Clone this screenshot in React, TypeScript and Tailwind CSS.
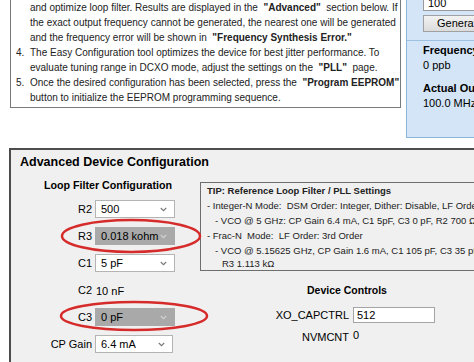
import React from "react";

function Chevron({ light }: { light?: boolean }) {
  return (
    <svg width="7" height="5" viewBox="0 0 7 5" className="shrink-0">
      <path d="M0.8 1 L3.5 3.7 L6.2 1" fill="none" stroke={light ? "#d0d0d0" : "#777"} strokeWidth="1.1" />
    </svg>
  );
}

function Select({ value, gray, w = 80 }: { value: string; gray?: boolean; w?: number }) {
  return (
    <div
      className={
        "h-[18px] flex items-center justify-between pl-[5px] pr-[7px] text-[11px] leading-none border " +
        (gray ? "bg-[#a9a9a9] border-[#a9a9a9]" : "bg-white border-[#b4b4b4]")
      }
      style={{ width: w }}
    >
      <span>{value}</span>
      <Chevron light={gray} />
    </div>
  );
}

function Row({ label, children }: { label: string; children: React.ReactNode }) {
  return (
    <div className="flex items-center h-[18px]">
      <div className="w-[81px] text-right text-[11px] leading-none">{label}</div>
      <div className="ml-[3px]">{children}</div>
    </div>
  );
}

export default function App() {
  return (
    <div className="relative w-[474px] h-[362px] overflow-hidden bg-white text-black font-['Liberation_Sans',Arial,sans-serif]">
      {/* top area */}
      <div className="flex h-[138px]">
        <div className="ml-[10px] w-[391px] h-[108px] shrink-0 border-x border-b border-[#7a7a7a] bg-white pl-[5px] text-[10px] leading-[15px] whitespace-pre text-[#222]">
          <div className="pl-[14px]">and optimize loop filter. Results are displayed in the  <b>"Advanced"</b>  section below. If</div>
          <div className="pl-[14px]">the exact output frequency cannot be generated, the nearest one will be generated</div>
          <div className="pl-[14px]">and the frequency error will be shown in  <b>"Frequency Synthesis Error."</b></div>
          <div className="flex"><span className="w-[14px]">4.</span><span>The Easy Configuration tool optimizes the device for best jitter performance. To</span></div>
          <div className="pl-[14px]">evaluate tuning range in DCXO mode, adjust the settings on the  <b>"PLL"</b>  page.</div>
          <div className="flex"><span className="w-[14px]">5.</span><span>Once the desired configuration has been selected, press the  <b>"Program EEPROM"</b></span></div>
          <div className="pl-[14px]">button to initialize the EEPROM programming sequence.</div>
        </div>
        <div className="ml-[5px] flex-1 min-w-0 h-[138px] bg-[#d3e5f6] border-l border-b border-[#8db4da] overflow-hidden whitespace-nowrap">
          <div className="ml-[16px] -mt-[10px] h-[21px] w-[120px] bg-white border border-[#9a9a9a] pl-[4px] text-[11px] leading-[24px]">100</div>
          <div className="ml-[16px] mt-[4px] h-[17px] w-[120px] border border-[#a0a0a0] bg-gradient-to-b from-[#f2f2f2] to-[#dcdcdc] pl-[13px] text-[11px] leading-[15px]">Generate</div>
          <div className="mt-[8px] border-b border-[#9cc0e2]" />
          <div className="pl-[16px] pt-[2px] text-[11px] leading-[15px]">
            <div className="font-bold">Frequency Synthesis Error</div>
            <div>0 ppb</div>
            <div className="mt-[8px] font-bold">Actual Output Frequency</div>
            <div>100.0 MHz</div>
          </div>
        </div>
      </div>

      {/* advanced panel */}
      <div className="ml-[9px] mt-[10px] h-[220px] border-t-2 border-l-2 border-[#4d4d4d] bg-[#f0f0f0]">
        <div className="h-[28px] pl-[9px] pt-[5px] text-[12.5px] leading-[15px] font-bold whitespace-nowrap">
          Advanced Device Configuration
        </div>
        <div className="flex">
          <div className="w-[189px] shrink-0">
            <div className="text-center text-[10.7px] leading-[14px] font-bold pl-[5px]">Loop Filter Configuration</div>
            <div className="mt-[8px] flex flex-col gap-[9px]">
              <Row label="R2"><Select value="500" /></Row>
              <Row label="R3"><Select value="0.018 kohm" gray /></Row>
              <Row label="C1"><Select value="5 pF" /></Row>
              <Row label="C2"><span className="text-[11px] leading-none pl-[1px]">10 nF</span></Row>
              <Row label="C3"><Select value="0 pF" gray /></Row>
              <Row label="CP Gain"><Select value="6.4 mA" w={78} /></Row>
            </div>
          </div>
          <div className="flex-1 min-w-0">
            <div className="mt-[4px] w-[400px] border border-r-0 border-[#6e6e6e] pl-[6px] text-[9.5px] whitespace-pre text-[#222]">
              <div className="leading-[15px] font-bold">TIP: Reference Loop Filter / PLL Settings</div>
              <div className="leading-[15px]">- Integer-N Mode:  DSM Order: Integer, Dither: Disable, LF Order: 2nd Order</div>
              <div className="leading-[15px] pl-[8px]">- VCO @ 5 GHz: CP Gain 6.4 mA, C1 5pF, C3 0 pF, R2 700 Ω</div>
              <div className="leading-[15px]">- Frac-N  Mode:  LF Order: 3rd Order</div>
              <div className="leading-[15px] pl-[8px]">- VCO @ 5.15625 GHz, CP Gain 1.6 mA, C1 105 pF, C3 35 pF, R2 600 Ω,</div>
              <div className="leading-[11px] pl-[15px] pb-[1px]">R3 1.113 kΩ</div>
            </div>
            <div className="mt-[12px] pl-[20px] text-center text-[10.5px] leading-[14px] font-bold">Device Controls</div>
            <div className="mt-[10px] flex items-center h-[16px]">
              <div className="w-[149px] text-right text-[11px] leading-none">XO_CAPCTRL</div>
              <div className="ml-[4px] w-[82px] h-[16px] bg-white border border-[#a5a5a5] pl-[3px] text-[11px] leading-[14px]">512</div>
            </div>
            <div className="mt-[7px] flex items-center h-[14px]">
              <div className="w-[149px] text-right text-[11px] leading-none">NVMCNT</div>
              <div className="ml-[4px] text-[11px] leading-none -mt-[4px]">0</div>
            </div>
          </div>
        </div>
      </div>

      {/* red annotation ellipses */}
      <svg className="absolute left-0 top-0 pointer-events-none" width="474" height="362">
        <ellipse cx="131" cy="236" rx="69" ry="16" fill="none" stroke="#d62b2b" strokeWidth="2.5" />
        <ellipse cx="134" cy="316" rx="73" ry="14" fill="none" stroke="#d62b2b" strokeWidth="2.5" />
      </svg>
    </div>
  );
}
